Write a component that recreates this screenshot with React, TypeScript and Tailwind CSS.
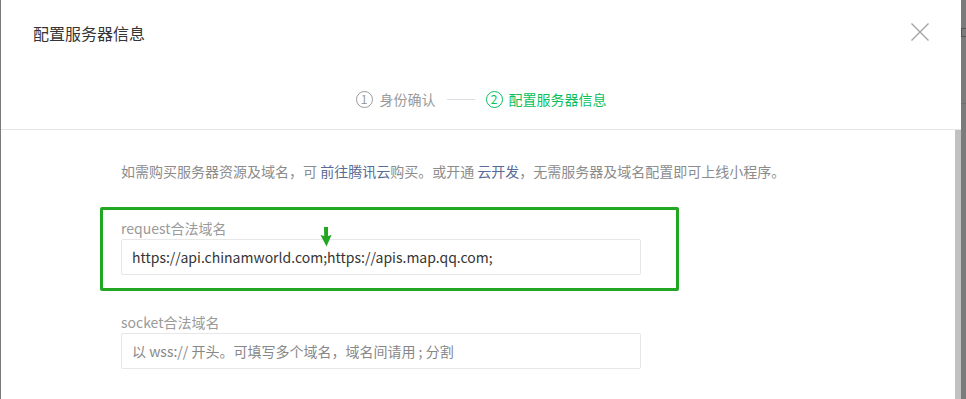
import React from 'react';

const font = { fontFamily: '"Noto Sans CJK SC", "Noto Sans", sans-serif' };

const StepCircle: React.FC<{ n: number; active?: boolean }> = ({ n, active }) => (
  <div
    className={`w-[17px] h-[17px] rounded-full border flex items-center justify-center text-[12px] leading-none ${
      active ? 'border-[#07c160] text-[#07c160]' : 'border-[#9a9a9a] text-[#9a9a9a]'
    }`}
  >
    {n}
  </div>
);

const Arrow: React.FC = () => (
  <svg width="12" height="20" viewBox="0 0 12 20" className="absolute left-[217px] top-[17px]">
    <path d="M4 0 L8 0 L8 9 L11.5 8 L6.5 19.5 L0.5 8 L4.2 9 Z" fill="#22a722" />
  </svg>
);

const App: React.FC = () => {
  return (
    <div className="w-[966px] h-[399px] bg-[#7b7b7b] flex overflow-hidden" style={font}>
      {/* Modal */}
      <div className="ml-px w-[960px] h-full bg-white flex flex-col">
        {/* Header */}
        <div className="h-[130px] border-b border-[#e5e5e5] flex flex-col">
          <div className="flex items-start justify-between pl-[32px] pr-[32px] pt-[22px]">
            <h2 className="text-[16px] leading-[22px] text-[#353535]">配置服务器信息</h2>
            <svg width="18" height="18" viewBox="0 0 18 18" className="mt-px">
              <path d="M0.5 0.5 L17.5 17.5 M17.5 0.5 L0.5 17.5" stroke="#a3a3a3" strokeWidth="1.4" />
            </svg>
          </div>
          {/* Steps */}
          <div className="mt-[45px] flex items-center justify-center text-[14px] leading-[20px]">
            <StepCircle n={1} />
            <span className="ml-[7px] text-[#9a9a9a]">身份确认</span>
            <span className="mx-[11px] w-[28px] h-px bg-[#dcdfe3]" />
            <StepCircle n={2} active />
            <span className="ml-[6px] text-[#07c160]">配置服务器信息</span>
          </div>
        </div>

        {/* Body */}
        <div className="flex-1 flex">
          <div className="flex-1 pl-[99px] pt-[31px]">
            <p className="pl-[21px] text-[14px] leading-[20px] text-[#8c8c8c]">
              如需购买服务器资源及域名，可 <span className="text-[#576b95]">前往腾讯云</span>购买。或开通{' '}
              <span className="text-[#576b95]">云开发</span>，无需服务器及域名配置即可上线小程序。
            </p>

            {/* request */}
            <div className="relative mt-[26px] w-[579px] border-[3px] border-[#22a722] rounded-[2px] pl-[18px] pt-[8px] pb-[13px]">
              <div className="text-[14px] leading-[20px] text-[#9a9a9a]">request合法域名</div>
              <div className="mt-px w-[520px] h-[36px] border border-[#e7e7e7] rounded-[2px] flex items-center px-[10px] text-[14px] text-[#353535]">
                https://api.chinamworld.com;https://apis.map.qq.com;
              </div>
              <Arrow />
            </div>

            {/* socket */}
            <div className="mt-[21px] pl-[21px]">
              <div className="text-[14px] leading-[20px] text-[#9a9a9a]">socket合法域名</div>
              <div className="mt-px w-[520px] h-[36px] border border-[#e7e7e7] rounded-[2px] flex items-center px-[10px] text-[14px] text-[#888888]">
                以 wss:// 开头。可填写多个域名，域名间请用 ; 分割
              </div>
            </div>
          </div>
          {/* Scrollbar */}
          <div className="w-[6px] h-full bg-[#c1c1c1]" />
        </div>
      </div>
      {/* Overlay edge */}
      <div className="flex-1 relative">
        <div className="absolute left-0 top-[28px] w-[5px] h-[9px] border-l border-t border-b border-[#555]" />
        <div className="absolute left-0 top-[103px] w-full h-px bg-[#6e6e6e]" />
      </div>
    </div>
  );
};

export default App;
